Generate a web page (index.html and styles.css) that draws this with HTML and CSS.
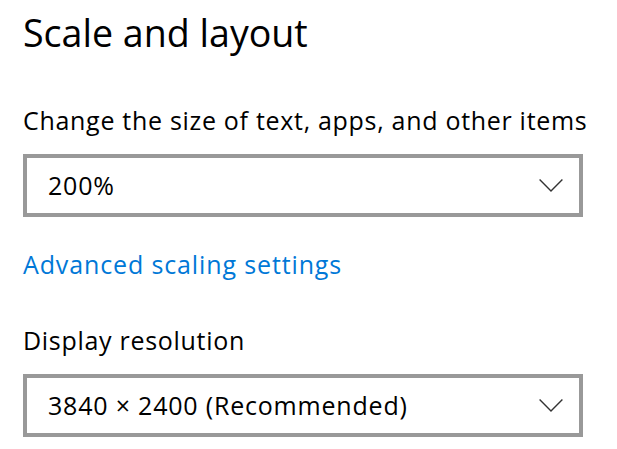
FILE: index.html
```html
<!DOCTYPE html>
<html lang="en">
<head>
<meta charset="utf-8">
<title>Scale and layout</title>
<link rel="stylesheet" href="styles.css">
</head>
<body>
<main class="page">
  <h1 class="title">Scale and layout</h1>
  <div class="label label-first">Change the size of text, apps, and other items</div>
  <div class="dropdown">
    <span class="dropdown-value">200%</span>
    <svg class="chevron" width="24" height="13" viewBox="0 0 24 13"><polyline points="0.6,0.6 12,12 23.4,0.6" fill="none" stroke="#333" stroke-width="1.4"/></svg>
  </div>
  <a class="link" href="#">Advanced scaling settings</a>
  <div class="label label-second">Display resolution</div>
  <div class="dropdown">
    <span class="dropdown-value">3840 × 2400 (Recommended)</span>
    <svg class="chevron" width="24" height="13" viewBox="0 0 24 13"><polyline points="0.6,0.6 12,12 23.4,0.6" fill="none" stroke="#333" stroke-width="1.4"/></svg>
  </div>
</main>
</body>
</html>
```
FILE: styles.css
```css
html, body {
  margin: 0;
  padding: 0;
  background: #ffffff;
}
.page {
  font-family: "Open Sans", "Noto Sans", sans-serif;
  color: #000;
  padding: 9px 0 0 23px;
  display: flex;
  flex-direction: column;
  align-items: flex-start;
}
.title {
  margin: 0;
  font-size: 37.6px;
  line-height: 48px;
  font-weight: 400;
}
.label {
  font-size: 25px;
  line-height: 32px;
  letter-spacing: 0.7px;
}
.label-first {
  margin-top: 47px;
}
.label-second {
  margin-top: 44px;
}
.dropdown {
  box-sizing: border-box;
  width: 560px;
  height: 63px;
  margin-top: 18px;
  border: 4px solid #999999;
  padding: 0 16px 0 21px;
  display: flex;
  align-items: center;
  justify-content: space-between;
}
.dropdown-value {
  font-size: 25px;
  line-height: 55px;
  letter-spacing: 0.8px;
}
.chevron {
  display: block;
}
.link {
  margin-top: 31px;
  font-size: 25px;
  line-height: 32px;
  letter-spacing: 0.87px;
  color: #0078d7;
  text-decoration: none;
}
```
